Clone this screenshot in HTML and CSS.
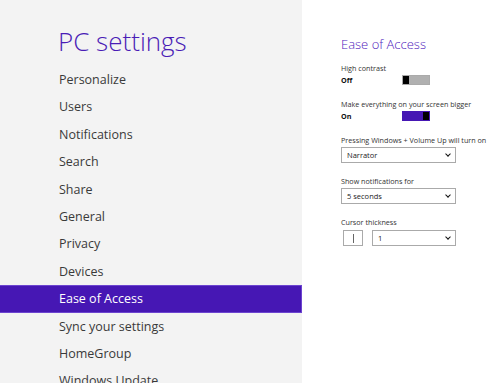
FILE: index.html
```html
<!DOCTYPE html>
<html lang="en">
<head>
    <meta charset="UTF-8">
    <title>PC settings</title>
    <link rel="stylesheet" href="styles.css">
</head>
<body>
    <div class="page">
        <div class="sidebar">
            <h1>PC settings</h1>
            <ul class="nav">
                <li>Personalize</li>
                <li>Users</li>
                <li>Notifications</li>
                <li>Search</li>
                <li>Share</li>
                <li>General</li>
                <li>Privacy</li>
                <li>Devices</li>
                <li class="active">Ease of Access</li>
                <li>Sync your settings</li>
                <li>HomeGroup</li>
                <li>Windows Update</li>
            </ul>
        </div>

        <div class="content">
            <h2>Ease of Access</h2>

            <div class="setting">
                <div class="label">High contrast</div>
                <div class="toggle-row">
                    <span class="state">Off</span>
                    <span class="toggle off"><span class="thumb"></span></span>
                </div>
            </div>

            <div class="setting">
                <div class="label">Make everything on your screen bigger</div>
                <div class="toggle-row">
                    <span class="state">On</span>
                    <span class="toggle on"><span class="thumb"></span></span>
                </div>
            </div>

            <div class="setting">
                <div class="label">Pressing Windows + Volume Up will turn on</div>
                <div class="select wide">Narrator<span class="chev"></span></div>
            </div>

            <div class="setting">
                <div class="label">Show notifications for</div>
                <div class="select wide">5 seconds<span class="chev"></span></div>
            </div>

            <div class="setting">
                <div class="label">Cursor thickness</div>
                <div class="cursor-row">
                    <div class="preview"><span class="caret"></span></div>
                    <div class="select narrow">1<span class="chev"></span></div>
                </div>
            </div>
        </div>
    </div>
</body>
</html>
```

FILE: styles.css
```css
body {
    margin: 0;
    padding: 0;
    font-family: "Open Sans", "Noto Sans", sans-serif;
    background: #fff;
    overflow: hidden;
}
.page {
    display: flex;
    height: 383px;
}
.sidebar {
    width: 302px;
    flex: none;
    background: #f3f3f3;
}
.sidebar h1 {
    margin: 0;
    padding: 24px 0 0 58px;
    height: 42px;
    font-size: 26px;
    font-weight: 300;
    line-height: 34px;
    color: #4a1cb6;
}
.nav {
    list-style: none;
    margin: 0;
    padding: 0;
}
.nav li {
    height: 27.4px;
    line-height: 27.4px;
    padding-left: 59px;
    font-size: 12.5px;
    color: #3a3a3a;
    box-sizing: border-box;
}
.nav li.active {
    background: #4617b4;
    color: #fff;
    border: 1px solid #6c44d0;
    border-left: none;
    line-height: 25.4px;
}
.content {
    flex: 1;
    padding: 34px 0 0 39px;
}
.content h2 {
    margin: 0 0 9px;
    font-size: 13px;
    font-weight: 300;
    line-height: 20px;
    color: #4f22bc;
}
.setting {
    margin-bottom: 13px;
}
.label {
    font-size: 7.2px;
    line-height: 11px;
    color: #333;
}
.toggle-row {
    display: flex;
    align-items: center;
    height: 12px;
}
.state {
    width: 61px;
    font-size: 7.2px;
    font-weight: 700;
    color: #111;
}
.toggle {
    display: flex;
    width: 26px;
    height: 8px;
    border: 1px solid #aaa;
}
.toggle .thumb {
    width: 6px;
    background: #000;
}
.toggle.off {
    background: #b0b0b0;
}
.toggle.on {
    flex-direction: row-reverse;
    background: #4617b4;
    border-color: #4617b4;
}
.select {
    position: relative;
    height: 14px;
    line-height: 14px;
    border: 1px solid #aaa;
    padding-left: 5px;
    font-size: 7.5px;
    color: #222;
    margin-top: 1px;
}
.select.wide {
    width: 108px;
}
.select.narrow {
    width: 77px;
}
.chev {
    position: absolute;
    right: 5px;
    top: 3.5px;
    width: 3px;
    height: 3px;
    border-right: 1.5px solid #111;
    border-bottom: 1.5px solid #111;
    transform: rotate(45deg);
}
.cursor-row {
    display: flex;
    gap: 9px;
    margin-top: 2px;
}
.cursor-row .select {
    margin-top: 0;
}
.preview {
    width: 18px;
    height: 14px;
    border: 1px solid #aaa;
    margin-left: 2px;
    display: flex;
    justify-content: center;
    align-items: center;
}
.caret {
    width: 1px;
    height: 9px;
    background: #666;
}
```
